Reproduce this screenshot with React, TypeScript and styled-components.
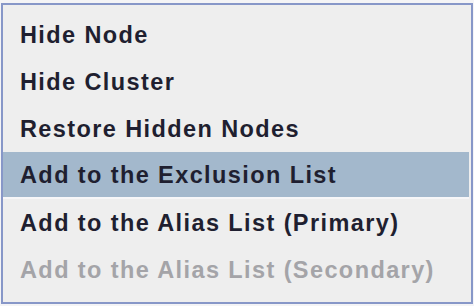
import { createGlobalStyle } from 'styled-components';
import styled from 'styled-components';

const GlobalStyle = createGlobalStyle`
  html, body {
    margin: 0;
    padding: 0;
    background: #f4f4f6;
  }
`;

const Popup = styled.ul`
  box-sizing: border-box;
  margin: 3px 0 0 1px;
  width: 472px;
  height: 301px;
  padding: 6px 2px 0 0;
  list-style: none;
  background: #eeeeee;
  border: 2px solid #8797c8;
  display: flex;
  flex-direction: column;
`;

const Item = styled.li<{ $selected?: boolean; $disabled?: boolean }>`
  height: 47px;
  display: flex;
  align-items: center;
  padding: 1px 0 0 17px;
  box-sizing: border-box;
  font-family: 'Liberation Sans', Arial, sans-serif;
  font-weight: bold;
  font-size: 23.5px;
  letter-spacing: 1.4px;
  color: ${({ $disabled }) => ($disabled ? '#a4a4a8' : '#1f1f30')};
  background: ${({ $selected }) => ($selected ? '#a3b8cc' : 'transparent')};
  border-bottom: ${({ $selected }) => ($selected ? '2px solid #f6f6f8' : 'none')};
  cursor: default;
`;

const items = [
  { label: 'Hide Node' },
  { label: 'Hide Cluster' },
  { label: 'Restore Hidden Nodes' },
  { label: 'Add to the Exclusion List', selected: true },
  { label: 'Add to the Alias List (Primary)' },
  { label: 'Add to the Alias List (Secondary)', disabled: true },
];

export default function App() {
  return (
    <>
      <GlobalStyle />
      <Popup>
        {items.map((it) => (
          <Item key={it.label} $selected={it.selected} $disabled={it.disabled}>
            {it.label}
          </Item>
        ))}
      </Popup>
    </>
  );
}
